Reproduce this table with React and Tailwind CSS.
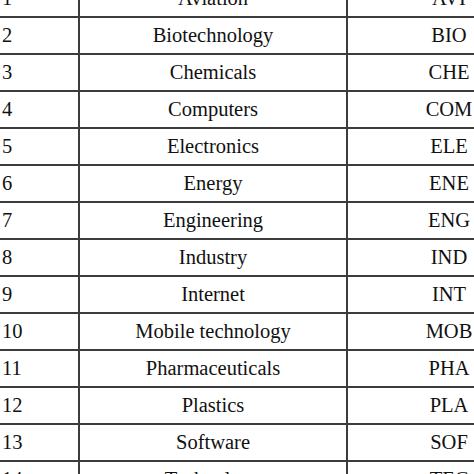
import React from "react";

const rows = [
  ["1", "Aviation", "AVI"],
  ["2", "Biotechnology", "BIO"],
  ["3", "Chemicals", "CHE"],
  ["4", "Computers", "COM"],
  ["5", "Electronics", "ELE"],
  ["6", "Energy", "ENE"],
  ["7", "Engineering", "ENG"],
  ["8", "Industry", "IND"],
  ["9", "Internet", "INT"],
  ["10", "Mobile technology", "MOB"],
  ["11", "Pharmaceuticals", "PHA"],
  ["12", "Plastics", "PLA"],
  ["13", "Software", "SOF"],
  ["14", "Technology", "TEC"],
];

export default function App() {
  return (
    <div className="w-[474px] h-[474px] overflow-hidden bg-white">
      <div
        className="w-[550px] mt-[-19px] text-[20.5px] text-[#111]"
        style={{ fontFamily: '"Liberation Serif", "Times New Roman", serif' }}
      >
        {rows.map(([n, name, code]) => (
          <div
            key={n}
            className="grid grid-cols-[80px_268px_202px] h-[37px] border-b-2 border-[#3c3c3c]"
          >
            <div className="flex items-center pl-[2px] border-r-2 border-[#3c3c3c] leading-none">
              {n}
            </div>
            <div className="flex items-center justify-center border-r-2 border-[#3c3c3c] leading-none">
              {name}
            </div>
            <div className="flex items-center justify-center leading-none">{code}</div>
          </div>
        ))}
      </div>
    </div>
  );
}
